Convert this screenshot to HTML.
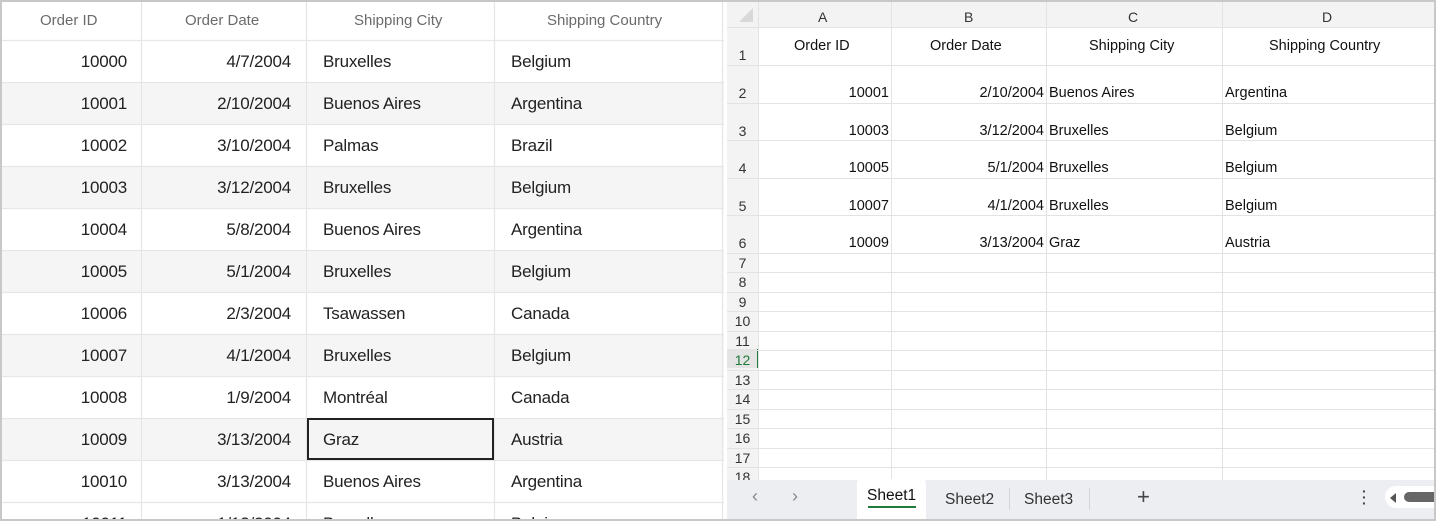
<!DOCTYPE html>
<html><head><meta charset="utf-8"><style>
*{margin:0;padding:0;box-sizing:border-box}
body{width:1436px;height:521px;overflow:hidden;background:#fff;font-family:"Liberation Sans",sans-serif;position:relative}
.frame{position:absolute;left:0;top:0;width:1436px;height:521px;border:2px solid #c8c8c8;z-index:5}
.a{position:absolute;white-space:nowrap}
.l{font-size:17px;color:#222;letter-spacing:-0.2px}
.h{font-size:15px;color:#6b6b6b}
.s{font-size:14.5px;color:#111}
.rh{font-size:14px;color:#333;width:31px;text-align:center}
</style></head><body>
<div class="frame"></div>
<!-- left grid -->
<div class="a" style="left:2px;top:2px;width:722px;height:517px;overflow:hidden">
<svg width="722" height="517" style="position:absolute;left:0;top:0">
<g fill="#f5f5f5">
<rect x="0" y="80" width="722" height="42"/><rect x="0" y="164" width="722" height="42"/><rect x="0" y="248" width="722" height="42"/><rect x="0" y="332" width="722" height="42"/><rect x="0" y="416" width="722" height="42"/>
</g>
<g stroke="#e6e6e6" stroke-width="1.2">
<line x1="139.5" y1="0" x2="139.5" y2="517"/><line x1="304.5" y1="0" x2="304.5" y2="517"/><line x1="492.5" y1="0" x2="492.5" y2="517"/><line x1="720.5" y1="0" x2="720.5" y2="517"/>
<line x1="0" y1="38.5" x2="722" y2="38.5"/><line x1="0" y1="80.5" x2="722" y2="80.5"/><line x1="0" y1="122.5" x2="722" y2="122.5"/><line x1="0" y1="164.5" x2="722" y2="164.5"/><line x1="0" y1="206.5" x2="722" y2="206.5"/><line x1="0" y1="248.5" x2="722" y2="248.5"/><line x1="0" y1="290.5" x2="722" y2="290.5"/><line x1="0" y1="332.5" x2="722" y2="332.5"/><line x1="0" y1="374.5" x2="722" y2="374.5"/><line x1="0" y1="416.5" x2="722" y2="416.5"/><line x1="0" y1="458.5" x2="722" y2="458.5"/><line x1="0" y1="500.5" x2="722" y2="500.5"/>
</g>
<rect x="306" y="417" width="185" height="40" fill="none" stroke="#222" stroke-width="2"/>
</svg>
<div class="a h" style="left:38px;top:10px">Order ID</div>
<div class="a h" style="left:183px;top:10px">Order Date</div>
<div class="a h" style="left:352px;top:10px">Shipping City</div>
<div class="a h" style="left:545px;top:10px">Shipping Country</div>
<div id="rows"></div>
</div>
<!-- right sheet -->
<div class="a" style="left:727px;top:2px;width:707px;height:478px;overflow:hidden">
<svg width="707" height="478" style="position:absolute;left:0;top:0">
<rect x="0" y="0" width="707" height="25" fill="#f3f3f3"/>
<rect x="0" y="0" width="31" height="478" fill="#f3f3f3"/>
<rect x="0" y="347" width="31" height="19" fill="#e4e4e4"/>
<line x1="31" y1="347" x2="31" y2="366" stroke="#1e7b3c" stroke-width="2"/>
<polygon points="26,6 26,20 12,20" fill="#d8d8d8"/>
<g stroke="#e3e3e3" stroke-width="1">
<line x1="31.5" y1="0" x2="31.5" y2="478"/><line x1="164.5" y1="0" x2="164.5" y2="478"/><line x1="319.5" y1="0" x2="319.5" y2="478"/><line x1="495.5" y1="0" x2="495.5" y2="478"/>
<line x1="0" y1="25.5" x2="707" y2="25.5"/><line x1="0" y1="63.5" x2="707" y2="63.5"/><line x1="0" y1="101.5" x2="707" y2="101.5"/><line x1="0" y1="138.5" x2="707" y2="138.5"/><line x1="0" y1="176.5" x2="707" y2="176.5"/><line x1="0" y1="213.5" x2="707" y2="213.5"/><line x1="0" y1="251.5" x2="707" y2="251.5"/>
<line x1="0" y1="270.5" x2="707" y2="270.5"/><line x1="0" y1="290.5" x2="707" y2="290.5"/><line x1="0" y1="309.5" x2="707" y2="309.5"/><line x1="0" y1="329.5" x2="707" y2="329.5"/><line x1="0" y1="348.5" x2="707" y2="348.5"/><line x1="0" y1="368.5" x2="707" y2="368.5"/><line x1="0" y1="387.5" x2="707" y2="387.5"/><line x1="0" y1="407.5" x2="707" y2="407.5"/><line x1="0" y1="426.5" x2="707" y2="426.5"/><line x1="0" y1="446.5" x2="707" y2="446.5"/><line x1="0" y1="465.5" x2="707" y2="465.5"/>
</g>
</svg>
</div>
<div class="a" style="left:818px;top:9px;font-size:14px;color:#333">A</div>
<div class="a" style="left:964px;top:9px;font-size:14px;color:#333">B</div>
<div class="a" style="left:1128px;top:9px;font-size:14px;color:#333">C</div>
<div class="a" style="left:1322px;top:9px;font-size:14px;color:#333">D</div>
<div class="a s" style="left:794px;top:38px">Order ID</div>
<div class="a s" style="left:930px;top:38px">Order Date</div>
<div class="a s" style="left:1089px;top:38px">Shipping City</div>
<div class="a s" style="left:1269px;top:38px">Shipping Country</div>
<div id="srows"></div>
<!-- tab bar -->
<div class="a" style="left:727px;top:480px;width:707px;height:39px;background:#eceef2"></div>
<div class="a" style="left:752px;top:486px;font-size:18px;color:#888">&#8249;</div>
<div class="a" style="left:792px;top:486px;font-size:18px;color:#888">&#8250;</div>
<div class="a" style="left:857px;top:479px;width:69px;height:40px;background:#fff;border-radius:4px 4px 0 0"></div>
<div class="a" style="left:867px;top:487px;font-size:15.5px;color:#111">Sheet1</div>
<div class="a" style="left:868px;top:506px;width:48px;height:2px;background:#1e7b3c"></div>
<div class="a" style="left:945px;top:491px;font-size:15.5px;color:#333">Sheet2</div>
<div class="a" style="left:1009px;top:488px;width:1px;height:22px;background:#d4d4d4"></div>
<div class="a" style="left:1024px;top:491px;font-size:15.5px;color:#333">Sheet3</div>
<div class="a" style="left:1089px;top:488px;width:1px;height:22px;background:#d4d4d4"></div>
<div class="a" style="left:1137px;top:484px;font-size:22px;color:#444">+</div>
<div class="a" style="left:1362px;top:488px;font-size:14px;color:#444;line-height:6px;font-weight:bold">·<br>·<br>·</div>
<div class="a" style="left:1385px;top:486px;width:50px;height:22px;background:#fff;border-radius:11px 0 0 11px"></div>
<div class="a" style="left:1390px;top:493px;width:0;height:0;border-top:5px solid transparent;border-bottom:5px solid transparent;border-right:6px solid #555"></div>
<div class="a" style="left:1404px;top:492px;width:30px;height:10px;background:#666;border-radius:5px 0 0 5px"></div>
<script>
var d=[["10000","4/7/2004","Bruxelles","Belgium"],["10001","2/10/2004","Buenos Aires","Argentina"],["10002","3/10/2004","Palmas","Brazil"],["10003","3/12/2004","Bruxelles","Belgium"],["10004","5/8/2004","Buenos Aires","Argentina"],["10005","5/1/2004","Bruxelles","Belgium"],["10006","2/3/2004","Tsawassen","Canada"],["10007","4/1/2004","Bruxelles","Belgium"],["10008","1/9/2004","Montréal","Canada"],["10009","3/13/2004","Graz","Austria"],["10010","3/13/2004","Buenos Aires","Argentina"],["10011","1/13/2004","Bruxelles","Belgium"]];
var h="";
d.forEach(function(r,i){var t=50+i*42;
h+='<div class="a l" style="right:597px;top:'+t+'px">'+r[0]+'</div>';
h+='<div class="a l" style="right:433px;top:'+t+'px">'+r[1]+'</div>';
h+='<div class="a l" style="left:321px;top:'+t+'px">'+r[2]+'</div>';
h+='<div class="a l" style="left:509px;top:'+t+'px">'+r[3]+'</div>';});
document.getElementById("rows").innerHTML=h;
var s=[["10001","2/10/2004","Buenos Aires","Argentina"],["10003","3/12/2004","Bruxelles","Belgium"],["10005","5/1/2004","Bruxelles","Belgium"],["10007","4/1/2004","Bruxelles","Belgium"],["10009","3/13/2004","Graz","Austria"]];
var ty=[85,123,160,198,235];h="";
s.forEach(function(r,i){var t=ty[i];
h+='<div class="a s" style="right:547px;top:'+t+'px">'+r[0]+'</div>';
h+='<div class="a s" style="right:392px;top:'+t+'px">'+r[1]+'</div>';
h+='<div class="a s" style="left:1049px;top:'+t+'px">'+r[2]+'</div>';
h+='<div class="a s" style="left:1225px;top:'+t+'px">'+r[3]+'</div>';});
var ry=[47,85,123,160,198,235,255,274,294,313,333,352,372,391,411,430,450,469];
ry.forEach(function(t,i){h+='<div class="a rh" style="left:727px;top:'+t+'px;'+(i==11?'color:#1e7b3c':'')+'">'+(i+1)+'</div>';});
document.getElementById("srows").innerHTML=h;
</script>
</body></html>
